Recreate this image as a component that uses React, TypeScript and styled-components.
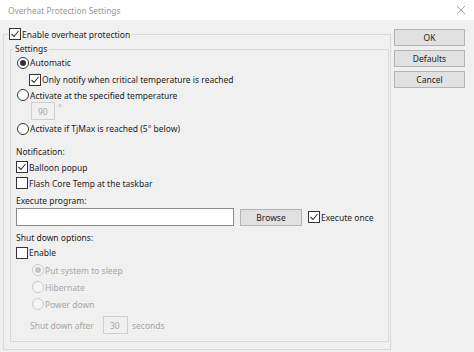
import React from "react";
import styled, { createGlobalStyle } from "styled-components";

const Global = createGlobalStyle`
  html, body { margin: 0; padding: 0; }
  body {
    width: 474px; height: 352px; overflow: hidden;
    background: #f0f0f0;
    font-family: "Noto Sans", "Open Sans", sans-serif;
    font-size: 8.5px;
    color: #1e1e1e;
  }
`;

const Window = styled.div`
  width: 474px;
  height: 352px;
  display: flex;
  flex-direction: column;
  background: #f0f0f0;
`;

const TitleBar = styled.div`
  height: 20px;
  flex: none;
  background: #ffffff;
  display: flex;
  align-items: center;
  justify-content: space-between;
  padding: 0 8px 0 8px;
  box-sizing: border-box;
`;

const Title = styled.span`
  font-size: 8.3px;
  color: #9a9a9a;
`;

const Close = styled.svg`
  width: 10px;
  height: 10px;
`;

const Main = styled.div`
  flex: 1;
  display: flex;
  flex-direction: row;
  padding-left: 3px;
`;

const OuterGroup = styled.fieldset`
  margin: 8px 0 0 0;
  padding: 3px 1px 0 6px;
  width: 388px;
  height: 322px;
  box-sizing: border-box;
  border: 1px solid #dadada;
  min-inline-size: 0;
`;

const OuterLegend = styled.legend`
  padding: 0 1px 0 0;
  margin-left: -1px;
  height: 12px;
  display: flex;
  align-items: center;
  gap: 1px;
`;

const InnerGroup = styled.fieldset`
  margin: 0;
  padding: 0 0 0 5px;
  height: 299px;
  box-sizing: border-box;
  border: 1px solid #dadada;
  min-inline-size: 0;
  display: flex;
  flex-direction: column;
`;

const InnerLegend = styled.legend`
  padding: 0 2px;
  margin-left: -3px;
  height: 12px;
  line-height: 12px;
`;

const Row = styled.div<{ $h: number; $mt?: number; $indent?: number }>`
  height: ${(p) => p.$h}px;
  margin-top: ${(p) => p.$mt ?? 0}px;
  padding-left: ${(p) => p.$indent ?? 0}px;
  display: flex;
  align-items: center;
  flex: none;
`;

const Text = styled.span<{ $disabled?: boolean; $w?: number }>`
  color: ${(p) => (p.$disabled ? "#a6a6a6" : "#1e1e1e")};
  white-space: nowrap;
  ${(p) => (p.$w ? `width: ${p.$w}px;` : "")}
`;

const ItemLabel = styled.span<{ $disabled?: boolean; $ml?: number }>`
  display: flex;
  align-items: center;
  gap: 1px;
  margin-left: ${(p) => p.$ml ?? 0}px;
  color: ${(p) => (p.$disabled ? "#a6a6a6" : "#1e1e1e")};
  white-space: nowrap;
`;

const BoxSvg = styled.svg`
  width: 12px;
  height: 12px;
  flex: none;
`;

const TextBox = styled.div<{ $w: number; $disabled?: boolean }>`
  width: ${(p) => p.$w}px;
  height: 18px;
  box-sizing: border-box;
  border: 1px solid ${(p) => (p.$disabled ? "#cfcfcf" : "#8a8a8a")};
  background: ${(p) => (p.$disabled ? "#f0f0f0" : "#ffffff")};
  color: #a6a6a6;
  display: flex;
  align-items: center;
  padding-left: 6px;
  flex: none;
`;

const Degree = styled.span`
  color: #a6a6a6;
  align-self: flex-start;
  margin-left: 3px;
`;

const Button = styled.button<{ $w: number; $ml?: number }>`
  width: ${(p) => p.$w}px;
  height: 17px;
  margin-left: ${(p) => p.$ml ?? 0}px;
  box-sizing: border-box;
  border: 1px solid #b4b4b4;
  background: #e1e1e1;
  font-family: inherit;
  font-size: 8.5px;
  color: #1e1e1e;
  padding: 0;
  flex: none;
`;

const Side = styled.div`
  display: flex;
  flex-direction: column;
  gap: 4px;
  padding: 9px 0 0 3px;
`;

const Check: React.FC<{ checked?: boolean }> = ({ checked }) => (
  <BoxSvg viewBox="0 0 12 12">
    <rect x="0.5" y="0.5" width="11" height="11" fill="#fff" stroke="#333" />
    {checked && (
      <polyline points="2.5,6 5,8.5 9.5,3" fill="none" stroke="#333" strokeWidth="1.1" />
    )}
  </BoxSvg>
);

const Radio: React.FC<{ checked?: boolean; disabled?: boolean }> = ({ checked, disabled }) => (
  <BoxSvg viewBox="0 0 12 12">
    <circle cx="6" cy="6" r="5.5" fill={disabled ? "#f5f5f5" : "#fff"} stroke={disabled ? "#cccccc" : "#333"} />
    {checked && <circle cx="6" cy="6" r="3" fill={disabled ? "#c4c4c4" : "#333"} />}
  </BoxSvg>
);

export default function App() {
  return (
    <Window>
      <Global />
      <TitleBar>
        <Title>Overheat Protection Settings</Title>
        <Close viewBox="0 0 10 10">
          <path d="M1 1 L9 9 M9 1 L1 9" stroke="#8a8a8a" strokeWidth="0.8" />
        </Close>
      </TitleBar>
      <Main>
        <OuterGroup>
          <OuterLegend>
            <ItemLabel>
              <Check checked />
              Enable overheat protection
            </ItemLabel>
          </OuterLegend>
          <InnerGroup>
            <InnerLegend>Settings</InnerLegend>
            <Row $h={15} $indent={1}>
              <ItemLabel><Radio checked />Automatic</ItemLabel>
            </Row>
            <Row $h={15} $mt={2} $indent={13}>
              <ItemLabel><Check checked />Only notify when critical temperature is reached</ItemLabel>
            </Row>
            <Row $h={14} $mt={1} $indent={1}>
              <ItemLabel><Radio />Activate at the specified temperature</ItemLabel>
            </Row>
            <Row $h={18} $indent={15}>
              <TextBox $w={24} $disabled>90</TextBox>
              <Degree>°</Degree>
            </Row>
            <Row $h={15} $mt={1} $indent={1}>
              <ItemLabel><Radio />Activate if TjMax is reached (5° below)</ItemLabel>
            </Row>
            <Row $h={16} $mt={7}>
              <Text>Notification:</Text>
            </Row>
            <Row $h={16}>
              <ItemLabel><Check checked />Balloon popup</ItemLabel>
            </Row>
            <Row $h={16}>
              <ItemLabel><Check />Flash Core Temp at the taskbar</ItemLabel>
            </Row>
            <Row $h={16} $mt={1}>
              <Text>Execute program:</Text>
            </Row>
            <Row $h={18}>
              <TextBox $w={218} />
              <Button $w={62} $ml={6}>Browse</Button>
              <ItemLabel $ml={6}><Check checked />Execute once</ItemLabel>
            </Row>
            <Row $h={16} $mt={3}>
              <Text>Shut down options:</Text>
            </Row>
            <Row $h={15}>
              <ItemLabel><Check />Enable</ItemLabel>
            </Row>
            <Row $h={16} $mt={2} $indent={16}>
              <ItemLabel $disabled><Radio checked disabled />Put system to sleep</ItemLabel>
            </Row>
            <Row $h={16} $mt={1} $indent={16}>
              <ItemLabel $disabled><Radio disabled />Hibernate</ItemLabel>
            </Row>
            <Row $h={16} $mt={1} $indent={16}>
              <ItemLabel $disabled><Radio disabled />Power down</ItemLabel>
            </Row>
            <Row $h={18} $mt={4} $indent={14}>
              <Text $disabled $w={73}>Shut down after</Text>
              <TextBox $w={25} $disabled>30</TextBox>
              <Text $disabled style={{ marginLeft: 4 }}>seconds</Text>
            </Row>
          </InnerGroup>
        </OuterGroup>
        <Side>
          <Button $w={71}>OK</Button>
          <Button $w={71}>Defaults</Button>
          <Button $w={71}>Cancel</Button>
        </Side>
      </Main>
    </Window>
  );
}
